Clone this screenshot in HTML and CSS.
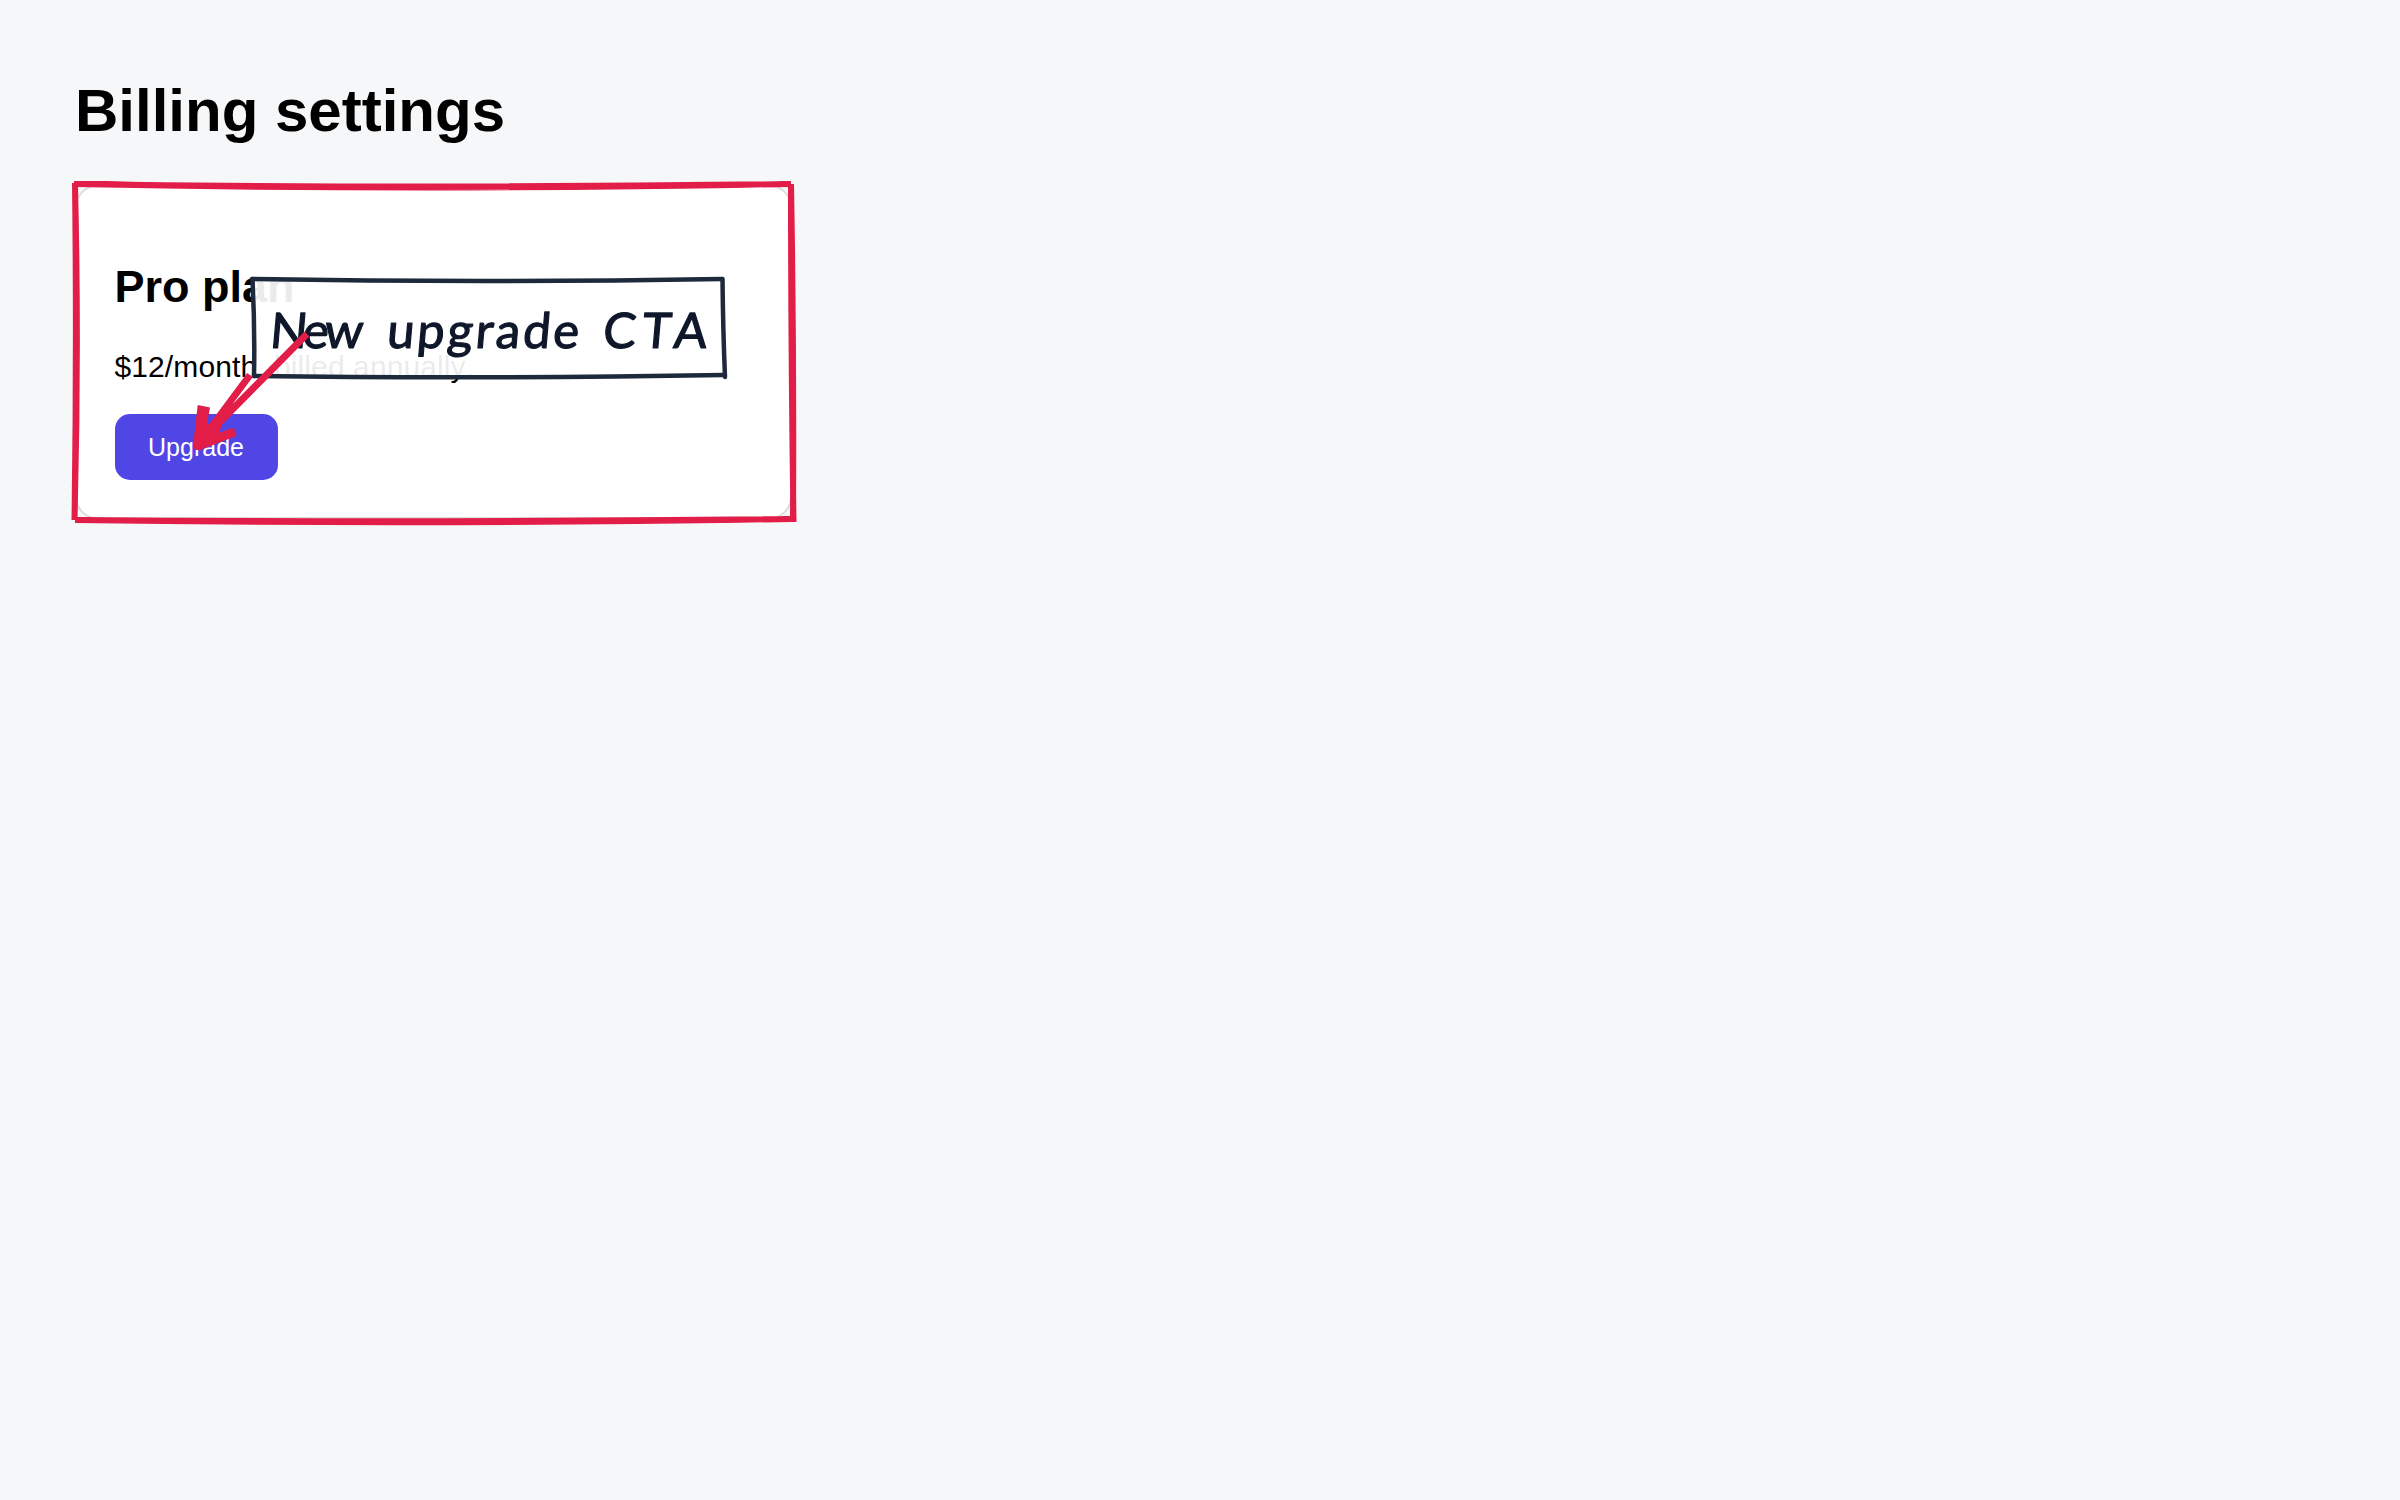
FILE: index.html
```html
<!DOCTYPE html>
<html lang="en">
<head>
    <meta charset="UTF-8">
    <meta name="viewport" content="width=device-width, initial-scale=1.0">
    <title>Billing settings</title>
    <link rel="stylesheet" href="styles.css">
</head>
<body>
    <h1>Billing settings</h1>
    <div class="card">
        <h2>Pro plan</h2>
        <p>$12/month, billed annually.</p>
        <button class="upgrade">Upgrade</button>
    </div>

    <!-- Annotations -->
    <svg class="annotations" width="2400" height="1500" viewBox="0 0 2400 1500">
        <g class="outline">
            <path d="M74 184Q420 189 791 184M75 184Q420 191 790 184"/>
            <path d="M791 184Q791 350 793.500 522M791 184Q794 350 793 521"/>
            <path d="M793 519Q430 525 75 520M791 519Q430 523 75 520"/>
            <path d="M74.500 520Q77 350 75 183M74.500 519Q79 350 75 185"/>
        </g>
        <path class="label-fill" d="M253 279H722L724 375H254Z"/>
        <g class="label-border">
            <path d="M252 279Q480 283 722 279"/>
            <path d="M722.500 279Q723 330 725 377"/>
            <path d="M724 375Q480 379 254 376"/>
            <path d="M254 376Q255 330 252.500 279"/>
        </g>
        <g class="label-text" transform="translate(0 348) skewX(-5)">
            <text x="269" textLength="93">New</text>
            <text x="386" textLength="192">upgrade</text>
            <text x="602" textLength="104">CTA</text>
        </g>
        <g class="arrow">
            <path d="M307 334L206 436M250 375L206 434"/>
            <path class="arrow-head" d="M197.700 405L210 407.500 207 424 222 425 219 433 233.500 427.500 236.500 436 200 450H195L193 446Z"/>
        </g>
    </svg>
</body>
</html>
```
FILE: styles.css
```css
body {
    font-family: "Liberation Sans", Arial, sans-serif;
    font-size: 30px;
    margin: 75px;
    background-color: #f6f7f9;
    color: #000;
}
h1 {
    font-size: 60px;
    line-height: 71px;
    margin: 0 0 39px;
}
.card {
    box-sizing: border-box;
    width: 717px;
    height: 334px;
    padding: 37px 37.5px;
    background-color: white;
    border: 2px solid #ddd;
    border-radius: 22px;
}
.card h2 {
    font-size: 45px;
    line-height: 52px;
    margin: 37px 0;
}
.card p {
    line-height: 34px;
    margin: 0 0 30px;
    font-kerning: none;
    letter-spacing: 0.1px;
}
.upgrade {
    display: block;
    width: 163px;
    height: 66px;
    padding: 0;
    font-family: inherit;
    font-size: 25px;
    color: white;
    background-color: #4f46e5;
    border: none;
    border-radius: 15px;
}
/* Annotations */
.annotations {
    position: absolute;
    top: 0;
    left: 0;
    pointer-events: none;
}
.outline path {
    fill: none;
    stroke: #e11d48;
    stroke-width: 6;
}
.label-fill {
    fill: white;
    fill-opacity: 0.92;
}
.label-border path {
    fill: none;
    stroke: #1e293b;
    stroke-width: 4.5;
    stroke-linecap: round;
}
.label-text {
    font-family: Lato, sans-serif;
    font-size: 49px;
    fill: #0f172a;
    stroke: #0f172a;
    stroke-width: 1.2;
    stroke-linejoin: round;
}
.arrow path {
    fill: none;
    stroke: #e11d48;
    stroke-width: 7;
}
.arrow .arrow-head {
    fill: #e11d48;
    stroke: none;
}
```
